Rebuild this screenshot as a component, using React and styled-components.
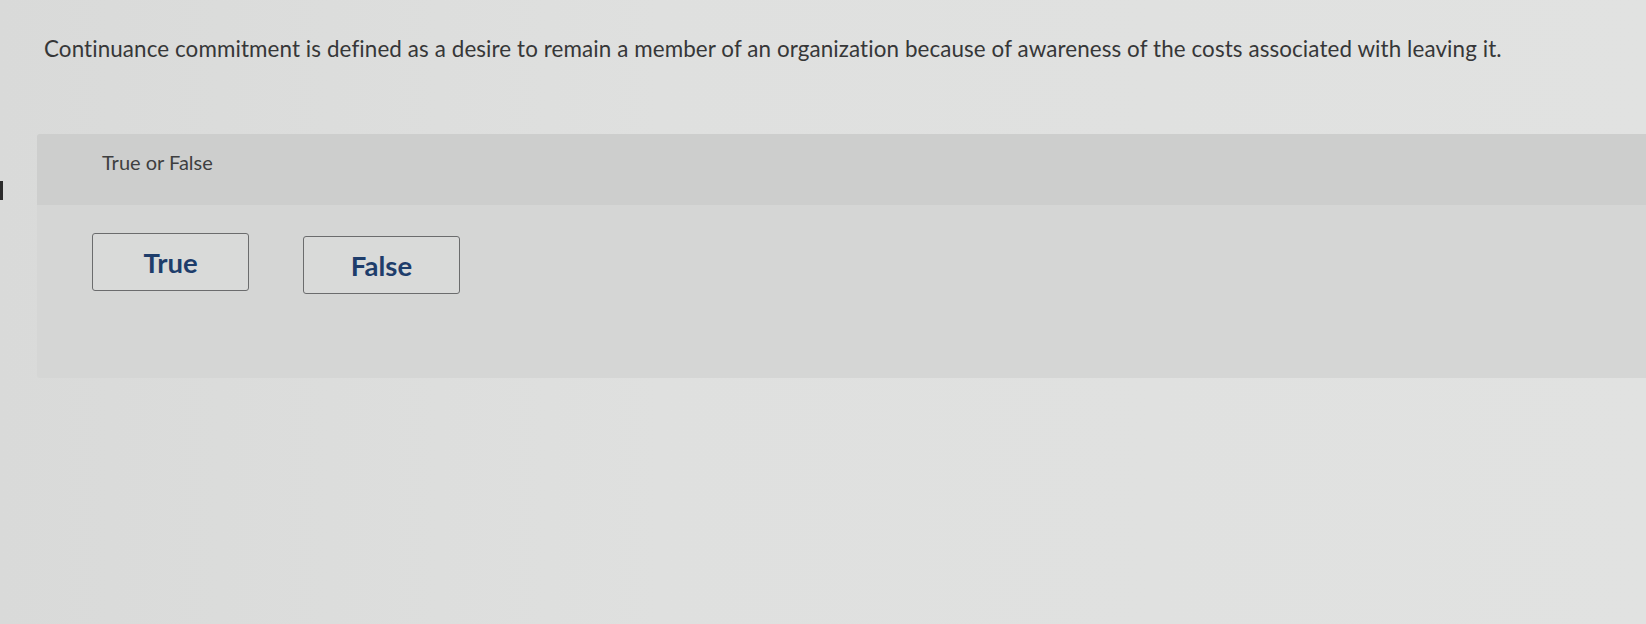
import React from "react";
import styled, { createGlobalStyle } from "styled-components";

const GlobalStyle = createGlobalStyle`
  html, body {
    margin: 0;
    padding: 0;
    background: #dcdddc;
  }
  body {
    font-family: Lato, "Open Sans", "Liberation Sans", sans-serif;
    color: #3a3b3c;
  }
`;

const Page = styled.div`
  position: relative;
  width: 1646px;
  height: 624px;
  overflow: hidden;
  background: linear-gradient(90deg, #d9dad9 0%, #dfe0df 40%, #e1e2e1 100%);
  padding: 32px 0 0 44px;
  box-sizing: border-box;
`;

const EdgeMark = styled.div`
  position: absolute;
  left: 0;
  top: 181px;
  width: 3px;
  height: 19px;
  background: #2b2b2b;
`;

const Prompt = styled.p`
  margin: 0;
  font-size: 22.4px;
  line-height: 34px;
  color: #363738;
  letter-spacing: 0.1px;
  white-space: nowrap;
`;

const Card = styled.section`
  margin: 68px 0 0 -7px;
  border-radius: 3px 0 0 3px;
  background: #d5d6d5;
  height: 244px;
  display: flex;
  flex-direction: column;
`;

const CardHeader = styled.div`
  height: 71px;
  background: #cdcecd;
  padding: 14px 0 0 65px;
  box-sizing: border-box;
  font-size: 20px;
  line-height: 28px;
  color: #3e3f40;
  border-radius: 3px 0 0 0;
`;

const Choices = styled.div`
  display: flex;
  gap: 54px;
  padding: 28px 0 0 55px;
`;

const Choice = styled.button`
  width: 157px;
  height: 58px;
  box-sizing: border-box;
  border: 1.5px solid #6b6c6d;
  border-radius: 3px;
  background: #d9dad9;
  font-family: inherit;
  font-weight: 700;
  font-size: 27.5px;
  color: #1e3d6b;
  cursor: pointer;
  padding: 0;
  margin-top: ${(p) => p.$offset || 0}px;
`;

export default function App() {
  return (
    <>
      <GlobalStyle />
      <Page>
        <EdgeMark />
        <Prompt>
          Continuance commitment is defined as a desire to remain a member of an
          organization because of awareness of the costs associated with leaving it.
        </Prompt>
        <Card>
          <CardHeader>True or False</CardHeader>
          <Choices>
            <Choice>True</Choice>
            <Choice $offset={3}>False</Choice>
          </Choices>
        </Card>
      </Page>
    </>
  );
}
